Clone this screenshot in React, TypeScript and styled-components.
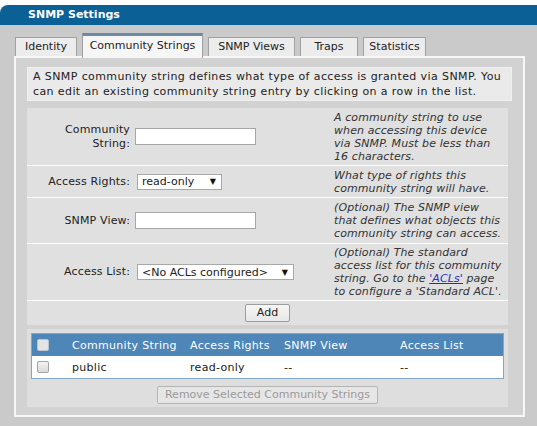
import styled, { createGlobalStyle } from 'styled-components';

const GlobalStyle = createGlobalStyle`
	body {
		margin: 0;
		background: #ffffff;
		font-family: "DejaVu Sans", Verdana, sans-serif;
		font-size: 11px;
		color: #222222;
	}
`;

const tabs = [
	{ label: 'Identity', width: 62 },
	{ label: 'Community Strings', width: 121 },
	{ label: 'SNMP Views', width: 87 },
	{ label: 'Traps', width: 58 },
	{ label: 'Statistics', width: 63 },
];

const App = () => {
	return (
		<Page>
			<GlobalStyle />
			<Header>SNMP Settings</Header>
			<Panel>
				<TabRow>
					{tabs.map((t) => (
						<Tab key={t.label} $active={t.label === 'Community Strings'} style={{ width: t.width }}>
							{t.label}
						</Tab>
					))}
				</TabRow>
				<Frame>
					<Intro>
						A SNMP community string defines what type of access is granted via SNMP. You
						<br />
						can edit an existing community string entry by clicking on a row in the list.
					</Intro>
					<FormTable>
						<Row $h={57}>
							<Label>
								Community
								<br />
								String:
							</Label>
							<Field>
								<TextInput type="text" />
							</Field>
							<Desc>
								A community string to use
								<br />
								when accessing this device
								<br />
								via SNMP. Must be less than
								<br />
								16 characters.
							</Desc>
						</Row>
						<Row $h={32}>
							<Label>Access Rights:</Label>
							<Field>
								<SelectBox $width={85}>
									<span>read-only</span>
									<Arrow>▼</Arrow>
								</SelectBox>
							</Field>
							<Desc>
								What type of rights this
								<br />
								community string will have.
							</Desc>
						</Row>
						<Row $h={46}>
							<Label>SNMP View:</Label>
							<Field>
								<TextInput type="text" />
							</Field>
							<Desc>
								(Optional) The SNMP view
								<br />
								that defines what objects this
								<br />
								community string can access.
							</Desc>
						</Row>
						<Row $h={57}>
							<Label>Access List:</Label>
							<Field>
								<SelectBox $width={157}>
									<span>&lt;No ACLs configured&gt;</span>
									<Arrow>▼</Arrow>
								</SelectBox>
							</Field>
							<Desc>
								(Optional) The standard
								<br />
								access list for this community
								<br />
								string. Go to the <DescLink>'ACLs'</DescLink> page
								<br />
								to configure a 'Standard ACL'.
							</Desc>
						</Row>
						<ButtonRow>
							<Button>Add</Button>
						</ButtonRow>
					</FormTable>
					<ListBox>
						<ListTable>
							<HeadRow>
								<CheckCell>
									<Check $head />
								</CheckCell>
								<Cell>Community String</Cell>
								<Cell>Access Rights</Cell>
								<Cell>SNMP View</Cell>
								<Cell>Access List</Cell>
							</HeadRow>
							<BodyRow>
								<CheckCell>
									<Check />
								</CheckCell>
								<Cell>public</Cell>
								<Cell>read-only</Cell>
								<Cell>--</Cell>
								<Cell>--</Cell>
							</BodyRow>
						</ListTable>
						<ListButtons>
							<Button disabled>Remove Selected Community Strings</Button>
						</ListButtons>
					</ListBox>
				</Frame>
			</Panel>
		</Page>
	);
};
export default App;

const Page = styled.div`
	width: 537px;
	height: 426px;
	padding-top: 5px;
	box-sizing: border-box;
	display: flex;
	flex-direction: column;
	overflow: hidden;
`;
const Header = styled.div`
	height: 20px;
	line-height: 20px;
	padding-left: 28px;
	background: #0b6096;
	border-top-left-radius: 8px;
	color: #ffffff;
	font-weight: bold;
	font-size: 11px;
`;
const Panel = styled.div`
	flex: 1;
	background: #cacaca;
	padding: 8px 12px 0 14px;
`;
const TabRow = styled.div`
	display: flex;
	align-items: flex-end;
	gap: 5px;
	padding-left: 1px;
	position: relative;
	z-index: 1;
	height: 23px;
`;
const Tab = styled.div<{ $active?: boolean }>`
	box-sizing: border-box;
	text-align: center;
	border: 1px solid #a0a0a0;
	border-bottom: none;
	background: ${(p) => (p.$active ? '#f6f6f6' : '#ececec')};
	border-top: ${(p) => (p.$active ? '3px solid #6c89a6' : '1px solid #a0a0a0')};
	line-height: 18px;
	height: ${(p) => (p.$active ? '25px' : '19px')};
	margin-bottom: ${(p) => (p.$active ? '-2px' : '0')};
	padding-top: ${(p) => (p.$active ? '1px' : '0')};
	color: #222222;
	white-space: nowrap;
`;
const Frame = styled.div`
	border: 2px solid #f7f7f7;
	background: #d2d2d2;
	padding: 9px 11px 8px 11px;
`;
const Intro = styled.div`
	background: #eaeaea;
	border: 1px solid #efefef;
	padding: 1px 5px 1px 5px;
	line-height: 15px;
	letter-spacing: 0.4px;
	white-space: nowrap;
`;
const FormTable = styled.div`
	margin-top: 7px;
	margin-right: 4px;
	background: #e0e0e0;
`;
const Row = styled.div<{ $h: number }>`
	display: grid;
	grid-template-columns: 108px 199px 1fr;
	align-items: center;
	box-sizing: border-box;
	height: ${(p) => p.$h}px;
	& + & {
		border-top: 1px solid #ffffff;
	}
`;
const Label = styled.div`
	text-align: right;
	padding-right: 5px;
	line-height: 14px;
	letter-spacing: 0.15px;
	color: #222222;
`;
const Field = styled.div`
	display: flex;
	align-items: center;
`;
const TextInput = styled.input`
	width: 121px;
	height: 17px;
	box-sizing: border-box;
	border: 1px solid #a6a6a6;
	background: #ffffff;
	margin: 0;
	padding: 0 3px;
	font: inherit;
`;
const SelectBox = styled.div<{ $width: number }>`
	width: ${(p) => p.$width}px;
	height: 16px;
	box-sizing: border-box;
	margin-left: 2px;
	border: 1px solid #a8a8a8;
	background: #ffffff;
	display: flex;
	align-items: center;
	justify-content: space-between;
	padding: 0 5px 0 4px;
	color: #222222;
	white-space: nowrap;
`;
const Arrow = styled.span`
	font-size: 8px;
	color: #111111;
`;
const Desc = styled.div`
	font-style: italic;
	line-height: 13px;
	letter-spacing: 0.1px;
	color: #333333;
	white-space: nowrap;
`;
const DescLink = styled.span`
	color: #2a2ac4;
	text-decoration: underline;
`;
const ButtonRow = styled.div`
	display: flex;
	justify-content: center;
	align-items: center;
	height: 25px;
	box-sizing: border-box;
	border-top: 1px solid #ffffff;
`;
const Button = styled.button`
	font-family: "DejaVu Sans", Verdana, sans-serif;
	font-size: 11px;
	height: 18px;
	padding: 0 11px;
	margin: 0;
	border: 1px solid #9c9c9c;
	border-radius: 2px;
	background: linear-gradient(#f6f6f6, #e8e8e8);
	color: #222222;
	line-height: 14px;
	&:disabled {
		color: #9a9a9a;
		border-color: #b4b4b4;
		background: #e6e6e6;
		padding: 0 7px;
	}
`;
const ListBox = styled.div`
	margin-top: 4px;
	margin-right: 4px;
	background: #dedede;
	padding: 4px 4px 3px 4px;
`;
const ListTable = styled.div`
	border: 1px solid #84a6c6;
	background: #ffffff;
`;
const HeadRow = styled.div`
	display: grid;
	grid-template-columns: 34px 118px 94px 116px 1fr;
	align-items: center;
	height: 22px;
	background: #4e86b8;
	color: #ffffff;
	letter-spacing: 0.3px;
`;
const BodyRow = styled(HeadRow)`
	height: 22px;
	background: #ffffff;
	color: #222222;
`;
const CheckCell = styled.div`
	padding-left: 5px;
	display: flex;
	align-items: center;
`;
const Cell = styled.div`
	padding-left: 6px;
	white-space: nowrap;
`;
const Check = styled.span<{ $head?: boolean }>`
	display: block;
	width: 12px;
	height: 12px;
	box-sizing: border-box;
	border: 1px solid ${(p) => (p.$head ? '#b9c4ce' : '#a4a4a4')};
	border-radius: 2px;
	background: ${(p) => (p.$head ? '#e4e4e4' : 'linear-gradient(#f2f2f2, #dadada)')};
`;
const ListButtons = styled.div`
	display: flex;
	justify-content: center;
	margin-top: 7px;
`;
